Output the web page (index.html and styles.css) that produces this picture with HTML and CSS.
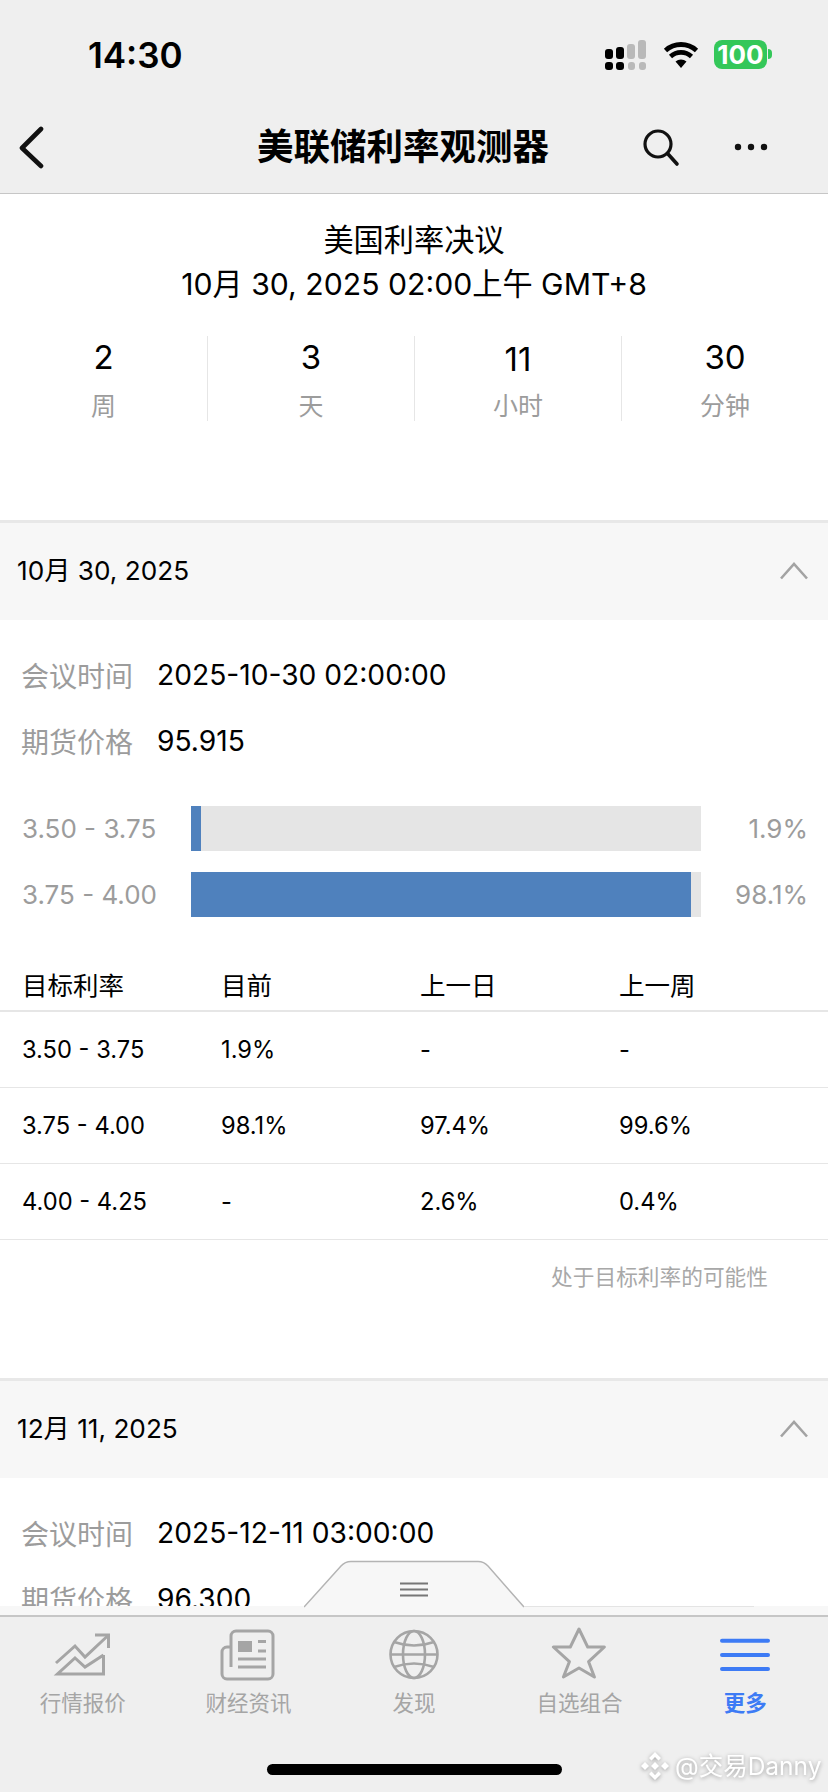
FILE: index.html
```html
<!DOCTYPE html>
<html lang="zh">
<head>
<meta charset="utf-8">
<title>美联储利率观测器</title>
<link rel="stylesheet" href="styles.css">
</head>
<body>
<div class="app">
  <header class="top">
    <div class="status">
      <span class="time">14:30</span>
      <div class="status-icons">
        <svg class="cell" width="44" height="32" viewBox="0 0 44 32">
          <g fill="#000"><rect x="1" y="10" width="8" height="10" rx="3"/><rect x="12" y="8" width="8" height="12" rx="3"/><rect x="1" y="23" width="8" height="8" rx="3"/><rect x="12" y="23" width="8" height="8" rx="3"/></g>
          <g fill="#b9b9b9"><rect x="23" y="5" width="8" height="15" rx="3"/><rect x="34" y="1" width="8" height="19" rx="3"/><rect x="24" y="23" width="7" height="8" rx="3"/><rect x="35" y="23" width="7" height="8" rx="3"/></g>
        </svg>
        <svg class="wifi" width="36" height="28" viewBox="0 0 36 28">
          <path d="M18 27 L12.5 20.5 A8.5 8.5 0 0 1 23.5 20.5Z" fill="#000"/>
          <path d="M7.5 15.5 A15.5 15.5 0 0 1 28.5 15.5" fill="none" stroke="#000" stroke-width="4.6"/>
          <path d="M2.5 9.5 A23 23 0 0 1 33.5 9.5" fill="none" stroke="#000" stroke-width="4.8"/>
        </svg>
        <div class="battery"><span class="battery-body">100</span><span class="battery-tip"></span></div>
      </div>
    </div>
    <nav class="navbar">
      <svg class="back" width="30" height="44" viewBox="0 0 30 44"><path d="M25 4 L6 23 L25 41" fill="none" stroke="#111" stroke-width="4.6" stroke-linecap="round" stroke-linejoin="round"/></svg>
      <h1 class="nav-title">美联储利率观测器</h1>
      <svg class="search" width="40" height="40" viewBox="0 0 40 40"><circle cx="17" cy="17" r="13" fill="none" stroke="#111" stroke-width="3.2"/><path d="M27 27 L36 37" stroke="#111" stroke-width="3.6" stroke-linecap="round"/></svg>
      <svg class="more" width="36" height="10" viewBox="0 0 36 10"><circle cx="5" cy="5" r="3.2" fill="#111"/><circle cx="18" cy="5" r="3.2" fill="#111"/><circle cx="31" cy="5" r="3.2" fill="#111"/></svg>
    </nav>
  </header>

  <main class="content">
    <section class="summary">
      <h2 class="event-title">美国利率决议</h2>
      <p class="event-date">10月 30, 2025 02:00上午 GMT+8</p>
      <div class="countdown">
        <div class="count"><span class="count-num">2</span><span class="count-label">周</span></div>
        <div class="count"><span class="count-num">3</span><span class="count-label">天</span></div>
        <div class="count"><span class="count-num count-low">11</span><span class="count-label">小时</span></div>
        <div class="count"><span class="count-num">30</span><span class="count-label">分钟</span></div>
      </div>
    </section>

    <section class="meeting">
      <div class="meeting-head">
        <span class="meeting-date">10月 30, 2025</span>
        <svg class="chevron" width="30" height="18" viewBox="0 0 30 18"><path d="M2 16.5 L15 2 L28 16.5" fill="none" stroke="#a3a3a3" stroke-width="2.6"/></svg>
      </div>
      <div class="meeting-body">
        <div class="info-row"><span class="info-label">会议时间</span><span class="info-value">2025-10-30 02:00:00</span></div>
        <div class="info-row"><span class="info-label">期货价格</span><span class="info-value">95.915</span></div>
        <div class="bars">
          <div class="bar-row"><span class="bar-label">3.50 - 3.75</span><div class="bar-track"><div class="bar-fill" style="width:1.9%"></div></div><span class="bar-pct">1.9%</span></div>
          <div class="bar-row"><span class="bar-label">3.75 - 4.00</span><div class="bar-track"><div class="bar-fill" style="width:98.1%"></div></div><span class="bar-pct">98.1%</span></div>
        </div>
        <div class="table">
          <div class="tr th"><span>目标利率</span><span>目前</span><span>上一日</span><span>上一周</span></div>
          <div class="tr"><span>3.50 - 3.75</span><span>1.9%</span><span>-</span><span>-</span></div>
          <div class="tr"><span>3.75 - 4.00</span><span>98.1%</span><span>97.4%</span><span>99.6%</span></div>
          <div class="tr"><span>4.00 - 4.25</span><span>-</span><span>2.6%</span><span>0.4%</span></div>
        </div>
        <p class="note">处于目标利率的可能性</p>
      </div>
    </section>

    <section class="meeting">
      <div class="meeting-head">
        <span class="meeting-date">12月 11, 2025</span>
        <svg class="chevron" width="30" height="18" viewBox="0 0 30 18"><path d="M2 16.5 L15 2 L28 16.5" fill="none" stroke="#a3a3a3" stroke-width="2.6"/></svg>
      </div>
      <div class="meeting-body">
        <div class="info-row"><span class="info-label">会议时间</span><span class="info-value">2025-12-11 03:00:00</span></div>
        <div class="info-row"><span class="info-label">期货价格</span><span class="info-value">96.300</span></div>
      </div>
    </section>
  </main>

  <div class="band"></div>

  <svg class="handle" width="232" height="48" viewBox="0 0 232 48">
    <path d="M0 47 L37 6 Q41 1.500 47 1.500 H174 Q180 1.500 184 6 L220 47 Z" fill="#f7f7f7"/>
    <path d="M0 47 L37 6 Q41 1.500 47 1.500 H174 Q180 1.500 184 6 L220 47" fill="none" stroke="#b4b4b4" stroke-width="1.500"/>
    <path d="M96 23.500 H124 M96 29.500 H124 M96 35.500 H124" stroke="#777" stroke-width="2"/>
  </svg>
  <div class="handle-line"></div>

  <footer class="tabbar">
    <div class="tabs">
      <div class="tab">
        <svg class="tab-icon" width="60" height="56" viewBox="0 0 60 56" fill="none" stroke="#a5a5a5" stroke-width="3"><path d="M3 36 L22 19 L32 30 L54.500 9"/><path d="M42 8 H55.500 V21"/><path d="M50.500 28 V47 H4.500 L22 31 L32 40 L50.500 28"/></svg>
        <span class="tab-label">行情报价</span>
      </div>
      <div class="tab">
        <svg class="tab-icon" width="60" height="56" viewBox="0 0 60 56" fill="none" stroke="#a5a5a5" stroke-width="3"><path d="M9 52 H50 a5 5 0 0 0 5 -5 V9 a5 5 0 0 0 -5 -5 H18 a5 5 0 0 0 -5 5 V40"/><path d="M13 20 H9 a5 5 0 0 0 -5 5 V47 a5 5 0 0 0 5 5"/><rect x="20" y="14" width="14" height="11" fill="#a5a5a5" stroke="none"/><path d="M40 14.500 H48 M40 24 H48 M20 32 H48 M20 40 H48"/></svg>
        <span class="tab-label">财经资讯</span>
      </div>
      <div class="tab">
        <svg class="tab-icon" width="60" height="56" viewBox="0 0 60 56" fill="none" stroke="#a5a5a5" stroke-width="2.600"><circle cx="30" cy="27.500" r="23.500"/><ellipse cx="30" cy="27.500" rx="11" ry="23.500"/><path d="M6.500 27.500 H53.500 M10 15 Q30 22 50 15 M10 40 Q30 33 50 40"/></svg>
        <span class="tab-label">发现</span>
      </div>
      <div class="tab">
        <svg class="tab-icon" width="60" height="56" viewBox="0 0 60 56" fill="none" stroke="#a5a5a5" stroke-width="3" stroke-linejoin="round"><path d="M29 2 L37.700 20 L54.400 20 L38.600 34.700 L44.400 50 L29 41 L13.400 50 L19.400 34.700 L3.400 20 L20.300 20 Z"/></svg>
        <span class="tab-label">自选组合</span>
      </div>
      <div class="tab tab-active">
        <svg class="tab-icon" width="60" height="56" viewBox="0 0 60 56" fill="none" stroke="#3d7bf5" stroke-width="4" stroke-linecap="round"><path d="M7 13.700 H53 M7 28 H53 M7 42 H53"/></svg>
        <span class="tab-label">更多</span>
      </div>
    </div>
    <div class="home"></div>
  </footer>

  <div class="watermark">
    <svg class="wm-logo" width="30" height="30" viewBox="0 0 30 30" fill="#fff"><path d="M15 1 L21 7 L18.500 9.500 L15 6 L11.500 9.500 L9 7Z"/><path d="M15 29 L21 23 L18.500 20.500 L15 24 L11.500 20.500 L9 23Z"/><path d="M1 15 L5 11 L9 15 L5 19Z"/><path d="M29 15 L25 11 L21 15 L25 19Z"/><path d="M15 11 L19 15 L15 19 L11 15Z"/></svg>
    <span class="wm-text">@交易Danny</span>
  </div>
</div>
</body>
</html>
```

FILE: styles.css
```css
* { box-sizing: border-box; }
html, body { margin: 0; padding: 0; }
body {
  background: #fff;
  color: #000;
  font-family: Inter, "Noto Sans CJK SC", "Liberation Sans", sans-serif;
}
h1, h2, p { margin: 0; font-weight: 400; }

.app {
  position: relative;
  width: 828px;
  height: 1792px;
  overflow: hidden;
  display: flex;
  flex-direction: column;
}

/* top bars */
.top {
  flex: none;
  height: 194px;
  background: #efefef;
  border-bottom: 1px solid #c6c6c6;
}
.status {
  height: 103px;
  display: flex;
  align-items: flex-start;
  justify-content: space-between;
  padding: 33px 56px 0 88px;
}
.time {
  font-size: 35px;
  line-height: 44px;
  font-weight: 600;
}
.status-icons {
  display: flex;
  align-items: flex-start;
  padding-top: 6px;
}
.cell { margin-right: 15px; }
.wifi { margin-right: 15px; margin-top: 2px; }
.battery { display: flex; align-items: center; height: 30px; }
.battery-body {
  width: 53px;
  height: 29px;
  background: #34c759;
  border-radius: 8px;
  color: #fff;
  font-weight: 700;
  font-size: 26px;
  line-height: 29px;
  text-align: center;
}
.battery-tip {
  width: 4px;
  height: 10px;
  margin-left: 1px;
  background: #34c759;
  border-radius: 0 4px 4px 0;
}
.navbar {
  height: 87px;
  display: flex;
  align-items: center;
  padding: 0 59px 0 16px;
}
.nav-title {
  margin-left: 211px;
  font-size: 36.500px;
  line-height: 46px;
  font-weight: 700;
  flex: none;
}
.back { flex: none; }
.search { margin-left: auto; flex: none; }
.more { margin-left: 52px; flex: none; }

/* content */
.content {
  flex: 1;
  min-height: 0;
  overflow: hidden;
  background: #fff;
}
.summary {
  padding: 24px 0 99px;
  text-align: center;
}
.event-title, .event-date {
  font-size: 30.200px;
  line-height: 44px;
}
.countdown {
  margin-top: 30px;
  display: grid;
  grid-template-columns: repeat(4, 207px);
  height: 85px;
}
.count {
  display: flex;
  flex-direction: column;
  align-items: center;
  border-left: 1px solid #e6e6e6;
}
.count:first-child { border-left: 0; }
.count-num {
  font-size: 33px;
  line-height: 43px;
}
.count-low { padding-top: 2px; }
.count-label {
  margin-top: 12px;
  font-size: 25px;
  line-height: 30px;
  color: #9c9c9c;
}
.count-low + .count-label { margin-top: 10px; }

.meeting { border-top: 3px solid #e8e8e8; }
.meeting-head {
  height: 97px;
  background: #f7f7f7;
  display: flex;
  align-items: center;
  justify-content: space-between;
  padding: 0 18px 2px 17px;
}
.meeting-date { font-size: 26.200px; line-height: 40px; }
.chevron { margin-right: 1px; }
.meeting-body { padding: 22px 0 86px; }

.info-row {
  height: 66px;
  display: flex;
  align-items: center;
  padding-left: 21px;
}
.info-label {
  width: 136px;
  font-size: 28px;
  color: #9c9c9c;
}
.info-value { font-size: 28.200px; }

.bars {
  margin-top: 32px;
  display: flex;
  flex-direction: column;
  gap: 21px;
}
.bar-row {
  display: flex;
  align-items: center;
  height: 45px;
  padding-left: 22px;
  color: #9c9c9c;
  font-size: 26px;
}
.bar-label { width: 169px; flex: none; }
.bar-track {
  width: 510px;
  height: 45px;
  flex: none;
  background: #e5e5e5;
}
.bar-fill { height: 100%; background: #4f81bd; }
.bar-pct { width: 107px; text-align: right; flex: none; }

.table { margin-top: 42px; }
.tr {
  display: grid;
  grid-template-columns: repeat(4, 199px);
  align-items: center;
  height: 76px;
  padding-left: 22px;
  border-bottom: 1px solid #e6e6e6;
  font-size: 23.700px;
}
.th {
  height: 53px;
  font-size: 25.500px;
  border-bottom-width: 2px;
  padding-bottom: 3px;
}
.note {
  padding: 22px 60px 0 0;
  text-align: right;
  font-size: 21.700px;
  line-height: 30px;
  color: #a8a8a8;
}

/* band and handle */
.band {
  flex: none;
  height: 9px;
  background: #f7f7f7;
}
.handle {
  position: absolute;
  left: 304px;
  top: 1560px;
}
.handle-line {
  position: absolute;
  left: 524px;
  top: 1606px;
  width: 230px;
  height: 1px;
  background: #e4e4e4;
}

/* tab bar */
.tabbar {
  flex: none;
  height: 177px;
  background: #efefef;
  border-top: 2px solid #c6c6c6;
}
.tabs {
  display: grid;
  grid-template-columns: repeat(5, 1fr);
  padding-top: 10px;
}
.tab {
  display: flex;
  flex-direction: column;
  align-items: center;
}
.tab-icon { display: block; }
.tab-label {
  margin-top: 5px;
  font-size: 21.500px;
  line-height: 30px;
  color: #a5a5a5;
}
.tab-active .tab-label { color: #3d7bf5; font-weight: 700; }
.home {
  width: 295px;
  height: 11px;
  margin: 46px auto 0;
  background: #000;
  border-radius: 6px;
}

/* watermark overlay */
.watermark {
  position: absolute;
  left: 640px;
  top: 1749px;
  display: flex;
  align-items: center;
  gap: 5px;
  color: #fff;
  filter: drop-shadow(0 1px 2px rgba(0,0,0,.35));
}
.wm-text { font-size: 24.500px; line-height: 34px; }
```
